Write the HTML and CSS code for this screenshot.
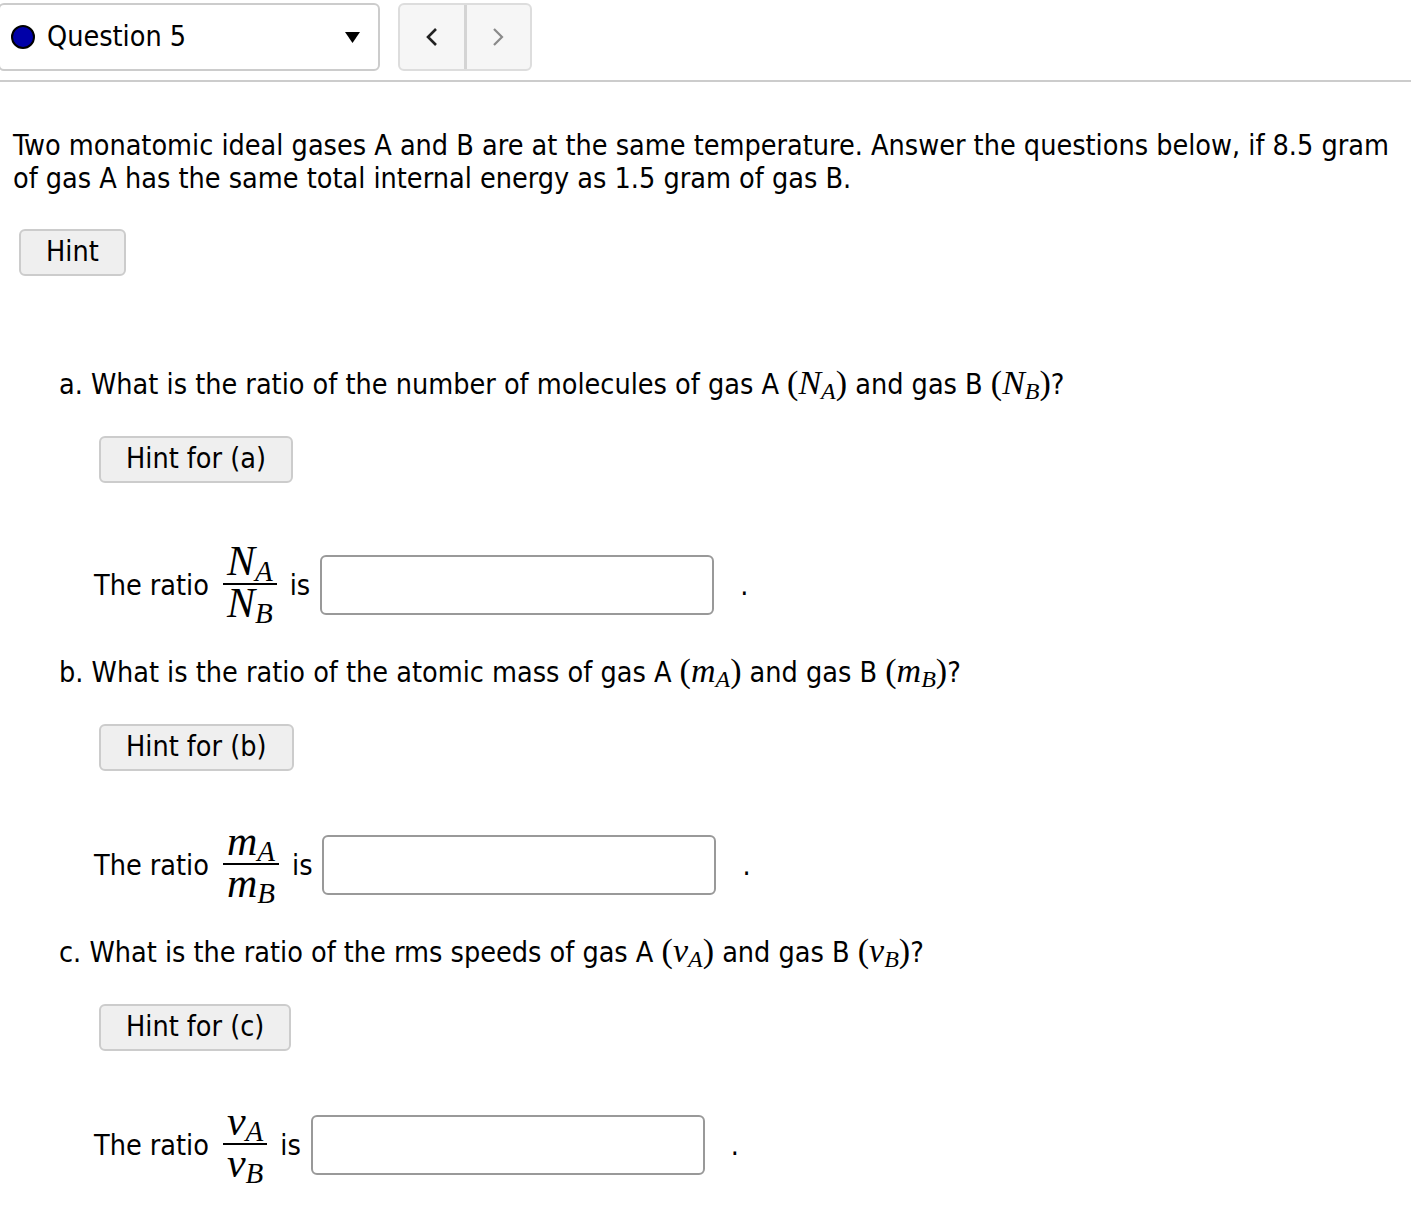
FILE: index.html
```html
<!DOCTYPE html>
<html>

<head>
    <meta charset="utf-8">
    <title>Question 5</title>
    <link rel="stylesheet" href="styles.css">
</head>

<body>
    <header class="topbar">
        <div class="qselect">
            <span class="dot"></span>
            <span class="qlabel">Question 5</span>
            <svg class="caret" width="15" height="11" viewBox="0 0 15 11">
                <polygon points="0,0 15,0 7.5,11" fill="#000" />
            </svg>
        </div>
        <nav class="qnav">
            <button class="navbtn prev" title="Previous">
                <svg width="14" height="20" viewBox="0 0 14 20">
                    <polyline points="11,2 3,10 11,18" fill="none" stroke="#222" stroke-width="2.6" />
                </svg>
            </button>
            <button class="navbtn next" title="Next">
                <svg width="14" height="20" viewBox="0 0 14 20">
                    <polyline points="3,2 11,10 3,18" fill="none" stroke="#8a8a8a" stroke-width="2.2" />
                </svg>
            </button>
        </nav>
    </header>

    <main class="problem">
        <p class="intro">Two monatomic ideal gases A and B are at the same temperature. Answer the questions below, if 8.5 gram of gas A has the same total internal energy as 1.5 gram of gas B.</p>
        <button class="hint">Hint</button>

        <section class="part part-a">
            <p class="ask">a. What is the ratio of the number of molecules of gas A <span class="math">(<i>N</i><sub>A</sub>)</span> and gas B <span class="math">(<i>N</i><sub>B</sub>)</span>?</p>
            <button class="hint">Hint for (a)</button>
            <div class="answer">
                <span>The ratio</span>
                <span class="frac">
                    <span class="num"><i>N</i><sub>A</sub></span>
                    <span class="den"><i>N</i><sub>B</sub></span>
                </span>
                <span>is</span>
                <input class="field" type="text">
                <span class="stop">.</span>
            </div>
        </section>

        <section class="part part-b">
            <p class="ask">b. What is the ratio of the atomic mass of gas A <span class="math">(<i>m</i><sub>A</sub>)</span> and gas B <span class="math">(<i>m</i><sub>B</sub>)</span>?</p>
            <button class="hint">Hint for (b)</button>
            <div class="answer">
                <span>The ratio</span>
                <span class="frac">
                    <span class="num"><i>m</i><sub>A</sub></span>
                    <span class="den"><i>m</i><sub>B</sub></span>
                </span>
                <span>is</span>
                <input class="field" type="text">
                <span class="stop">.</span>
            </div>
        </section>

        <section class="part part-c">
            <p class="ask">c. What is the ratio of the rms speeds of gas A <span class="math">(<i>v</i><sub>A</sub>)</span> and gas B <span class="math">(<i>v</i><sub>B</sub>)</span>?</p>
            <button class="hint">Hint for (c)</button>
            <div class="answer">
                <span>The ratio</span>
                <span class="frac">
                    <span class="num"><i>v</i><sub>A</sub></span>
                    <span class="den"><i>v</i><sub>B</sub></span>
                </span>
                <span>is</span>
                <input class="field" type="text">
                <span class="stop">.</span>
            </div>
        </section>
    </main>
</body>

</html>
```

FILE: styles.css
```css
body {
    margin: 0;
    font-family: "DejaVu Sans Condensed", "DejaVu Sans", sans-serif;
    font-stretch: condensed;
    font-size: 28.5px;
    color: #000;
    background-color: #fff;
}

/* top bar */

.topbar {
    display: flex;
    gap: 18px;
    padding: 3px 0 9px 0;
    border-bottom: 2px solid #ccc;
}

.qselect {
    display: flex;
    align-items: center;
    box-sizing: border-box;
    width: 382px;
    height: 68px;
    margin-left: -2px;
    padding: 0 18px 0 11px;
    border: 2px solid #ccc;
    border-radius: 6px;
}

.dot {
    box-sizing: border-box;
    width: 24px;
    height: 24px;
    margin-right: 12px;
    border: 2px solid #000;
    border-radius: 50%;
    background-color: #0000a8;
}

.qlabel {
    line-height: 1;
}

.caret {
    margin-left: auto;
}

.qnav {
    display: flex;
    box-sizing: border-box;
    width: 134px;
    height: 68px;
    border: 2px solid #ddd;
    border-radius: 6px;
    background-color: #f6f6f6;
    overflow: hidden;
}

.navbtn {
    flex: 1;
    display: flex;
    align-items: center;
    justify-content: center;
    padding: 0;
    border: none;
    background: transparent;
}

.navbtn.next {
    border-left: 3px solid #d4d4d4;
}

/* problem */

.problem {
    padding: 0 0 0 13px;
}

.intro {
    margin: 47px 0 0 0;
    line-height: 33px;
}

.hint {
    display: block;
    box-sizing: border-box;
    height: 47px;
    margin: 34px 0 0 6px;
    padding: 0 25px;
    border: 2px solid #ccc;
    border-radius: 6px;
    background-color: #efefef;
    font-family: inherit;
    font-stretch: inherit;
    font-size: 28.5px;
    line-height: 1;
    color: #000;
}

.part {
    padding-left: 46px;
    margin-top: 26px;
}

.part-a {
    margin-top: 92px;
}

.ask {
    margin: 0;
    line-height: 33px;
}

.part .hint {
    margin: 35px 0 0 40px;
}

.math {
    font-family: "Liberation Serif", "DejaVu Serif", serif;
    font-stretch: normal;
    font-size: 34px;
    line-height: 0;
}

.math sub {
    font-size: 24px;
    font-style: italic;
    vertical-align: -5px;
    line-height: 0;
}

/* answer rows */

.answer {
    display: flex;
    align-items: center;
    height: 90px;
    margin: 49px 0 0 35px;
}

.part-a .answer {
    margin-top: 57px;
}

.frac {
    display: flex;
    flex-direction: column;
    align-items: center;
    margin: 0 13px 0 14px;
    font-family: "Liberation Serif", "DejaVu Serif", serif;
    font-stretch: normal;
    font-size: 42px;
    line-height: 40px;
}

.frac .num {
    height: 40px;
    padding: 0 4px;
    border-bottom: 2px solid #000;
    box-sizing: border-box;
    line-height: 32px;
}

.frac .den {
    height: 40px;
    line-height: 36px;
}

.frac sub {
    font-size: 29px;
    font-style: italic;
    vertical-align: -6px;
    line-height: 0;
}

.field {
    box-sizing: border-box;
    width: 394px;
    height: 60px;
    margin-left: 10px;
    border: 2px solid #999;
    border-radius: 6px;
    background-color: #fff;
    font-size: 26px;
}

.stop {
    margin-left: 26px;
}
```
